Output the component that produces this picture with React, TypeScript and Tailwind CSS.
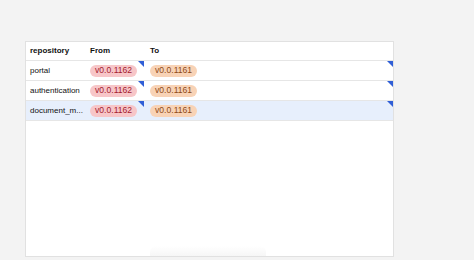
import React from "react";

type Row = { repo: string; from: string; to: string; selected?: boolean };

const rows: Row[] = [
  { repo: "portal", from: "v0.0.1162", to: "v0.0.1161" },
  { repo: "authentication", from: "v0.0.1162", to: "v0.0.1161" },
  { repo: "document_m...", from: "v0.0.1162", to: "v0.0.1161", selected: true },
];

// small blue marker in a cell's top-right corner
function Corner({ className }: { className: string }) {
  return (
    <span
      className={`absolute top-0 w-[6px] h-[6px] bg-[#2f5ed6] [clip-path:polygon(0_0,100%_0,100%_100%)] ${className}`}
    />
  );
}

function Badge({ text, tone }: { text: string; tone: "red" | "orange" }) {
  const cls =
    tone === "red"
      ? "bg-[#f7c6c8] text-[#a3202f]"
      : "bg-[#f8d3b6] text-[#8f4a17]";
  return (
    <span className={`inline-flex items-center h-[12px] px-[5px] rounded-full text-[8.6px] leading-none ${cls}`}>
      {text}
    </span>
  );
}

export default function App() {
  return (
    <div
      className="relative w-[474px] h-[260px] bg-[#f3f3f3] pl-[25px] pt-[41px] overflow-hidden"
      style={{ fontFamily: '"Liberation Sans", Arial, sans-serif' }}
    >
      <div className="w-[369px] h-[216px] bg-white border border-[#e1e1e1] text-[8px] text-[#111]">
        <div className="grid grid-cols-[59px_60px_1fr] h-[19px] items-center border-b border-[#e6e6e6] font-bold">
          <div className="pl-[4px]">repository</div>
          <div className="pl-[5px]">From</div>
          <div className="pl-[5px]">To</div>
        </div>
        {rows.map((r) => (
          <div
            key={r.repo}
            className={`grid grid-cols-[59px_60px_1fr] h-[20px] items-center border-b border-[#e6e6e6] ${
              r.selected ? "bg-[#e7effc]" : ""
            }`}
          >
            <div className="pl-[4px] truncate">{r.repo}</div>
            <div className="relative h-full flex items-center pl-[5px]">
              <Badge text={r.from} tone="red" />
              <Corner className="right-[1px]" />
            </div>
            <div className="relative h-full flex items-center pl-[5px]">
              <Badge text={r.to} tone="orange" />
              <Corner className="right-0" />
            </div>
          </div>
        ))}
      </div>
      <div className="absolute left-[150px] top-[246px] w-[116px] h-[10px] rounded-t-[6px] bg-gradient-to-b from-transparent to-[#f6f6f6]" />
    </div>
  );
}
